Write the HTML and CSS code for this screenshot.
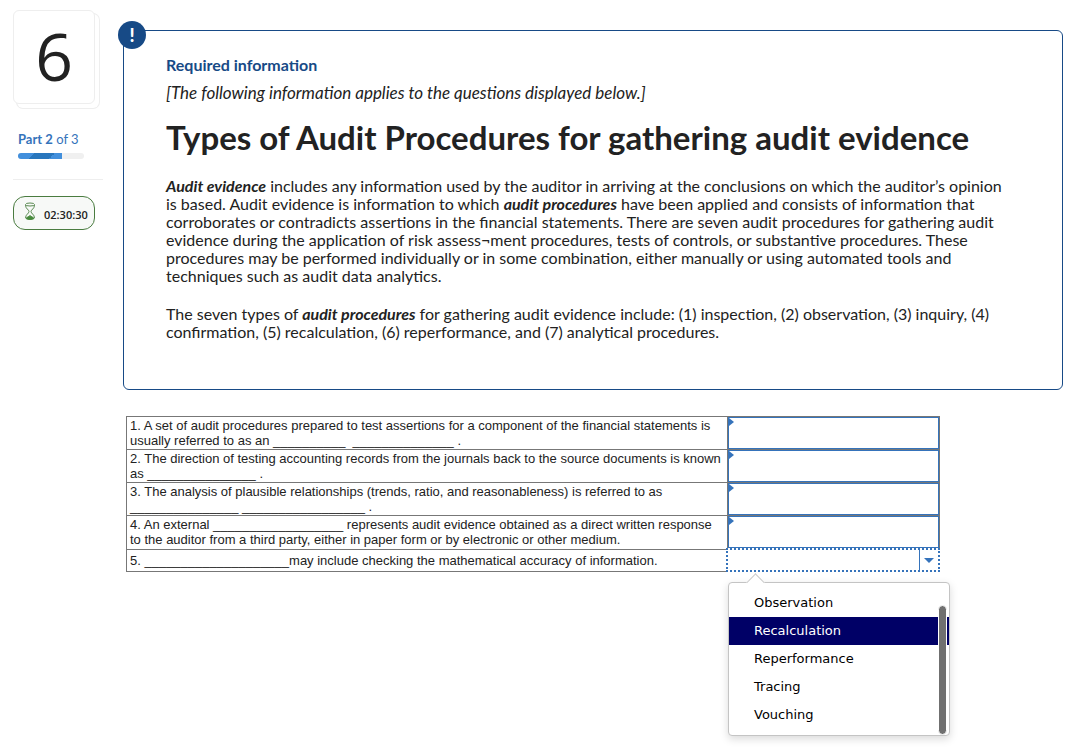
FILE: index.html
```
<!DOCTYPE html>
<html lang="en">
<head>
    <meta charset="UTF-8">
    <title>Question 6</title>
    <link rel="stylesheet" href="styles.css">
</head>
<body>
    <aside class="sidebar">
        <div class="question-number">6</div>
        <div class="part">
            <div class="part-label"><b>Part 2</b> of 3</div>
            <div class="progress"><div class="progress-bar"></div></div>
        </div>
        <div class="timer">
            <svg class="hourglass" width="12" height="19" viewBox="0 0 12 19" fill="none" stroke="#5a8a52">
                <ellipse cx="6" cy="2.500" rx="4.500" ry="1.500"/>
                <path d="M1.500 3C1.500 7 5 7.500 5 9.500S1.500 12.500 1.500 16M10.500 3C10.500 7 7 7.500 7 9.500S10.500 12.500 10.500 16"/>
                <path d="M2 16.500C2.500 15 5 15 6 13.500C7 15 9.500 15 10 16.500C9 17.800 3 17.800 2 16.500Z" fill="#478a3c" stroke="#478a3c"/>
            </svg>
            <span>02:30:30</span>
        </div>
    </aside>

    <main class="content">
        <section class="info-box">
            <span class="info-badge">!</span>
            <h2>Required information</h2>
            <p class="applies"><i>[The following information applies to the questions displayed below.]</i></p>
            <h1>Types of Audit Procedures for gathering audit evidence</h1>
            <p><b><i>Audit evidence</i></b> includes any information used by the auditor in arriving at the conclusions on which the auditor’s opinion<br>
            is based. Audit evidence is information to which <b><i>audit procedures</i></b> have been applied and consists of information that<br>
            corroborates or contradicts assertions in the financial statements. There are seven audit procedures for gathering audit<br>
            evidence during the application of risk assess¬ment procedures, tests of controls, or substantive procedures. These<br>
            procedures may be performed individually or in some combination, either manually or using automated tools and<br>
            techniques such as audit data analytics.</p>
            <p>The seven types of <b><i>audit procedures</i></b> for gathering audit evidence include: (1) inspection, (2) observation, (3) inquiry, (4)<br>
            confirmation, (5) recalculation, (6) reperformance, and (7) analytical procedures.</p>
        </section>

        <table class="questions">
            <tr>
                <td><label for="answer1">1. A set of audit procedures prepared to test assertions for a component of the financial statements is usually referred to as an __________ &nbsp;______________ .</label></td>
                <td class="answer"><select id="answer1"><option></option></select></td>
            </tr>
            <tr>
                <td><label for="answer2">2. The direction of testing accounting records from the journals back to the source documents is known as _______________ .</label></td>
                <td class="answer"><select id="answer2"><option></option></select></td>
            </tr>
            <tr>
                <td><label for="answer3">3. The analysis of plausible relationships (trends, ratio, and reasonableness) is referred to as _______________ _________________ .</label></td>
                <td class="answer"><select id="answer3"><option></option></select></td>
            </tr>
            <tr>
                <td><label for="answer4">4. An external __________________ represents audit evidence obtained as a direct written response to the auditor from a third party, either in paper form or by electronic or other medium.</label></td>
                <td class="answer"><select id="answer4"><option></option></select></td>
            </tr>
            <tr class="last">
                <td><label for="answer5">5. ____________________may include checking the mathematical accuracy of information.</label></td>
                <td class="answer active">
                    <select id="answer5"><option></option></select>
                    <span class="arrow"></span>
                    <div class="menu">
                        <button type="button">Observation</button>
                        <button type="button" class="selected">Recalculation</button>
                        <button type="button">Reperformance</button>
                        <button type="button">Tracing</button>
                        <button type="button">Vouching</button>
                        <span class="scroll-thumb"></span>
                    </div>
                </td>
            </tr>
        </table>
    </main>
</body>
</html>
```
FILE: styles.css
```
* {
    box-sizing: border-box;
}
body {
    display: flex;
    gap: 20px;
    min-height: 100vh;
    margin: 0;
    padding: 10px 17px 10px 13px;
    background: #fff;
    color: #222;
    font-family: Lato, sans-serif;
    font-size: 16px;
    line-height: 18px;
}

/* left column */
.sidebar {
    flex: 0 0 90px;
}
.question-number {
    width: 82px;
    height: 94px;
    border: 1px solid #eee;
    border-radius: 6px;
    background: #fff;
    box-shadow: 4px 4px 0 0 #fff, 4px 4px 0 1px #eee;
    font-family: "Open Sans", sans-serif;
    font-size: 66px;
    line-height: 88px;
    text-align: center;
}
.part {
    padding: 26px 5px 20px;
    border-bottom: 1px solid #eee;
    color: #3573bb;
    font-size: 13px;
}
.progress {
    width: 66px;
    height: 6px;
    margin-top: 5px;
    border-radius: 3px;
    background: #f0f0f0;
    overflow: hidden;
}
.progress-bar {
    width: 44px;
    height: 6px;
    background: linear-gradient(135deg, #428fdc 0 32%, #2876bd 32% 74%, #428fdc 74%);
}
.timer {
    display: flex;
    align-items: center;
    gap: 8px;
    width: 82px;
    height: 34px;
    margin-top: 16px;
    padding-left: 10px;
    border: 1px solid #4a7c40;
    border-radius: 12px;
    background: #f7f9f7;
    font-family: "Open Sans", sans-serif;
    font-size: 11px;
    font-weight: 600;
}
.timer span {
    padding-top: 4px;
}
.hourglass {
    margin-bottom: 4px;
}

/* required information */
.content {
    flex: 1;
    min-width: 0;
    padding-top: 20px;
}
.info-box {
    position: relative;
    padding: 25px 42px 28px;
    border: 1px solid #174a86;
    border-radius: 6px;
}
.info-badge {
    position: absolute;
    top: -10px;
    left: -6px;
    width: 28px;
    height: 28px;
    border-radius: 50%;
    background: #174a86;
    color: #fff;
    font-size: 18px;
    font-weight: 900;
    line-height: 28px;
    text-align: center;
}
.info-box h2 {
    margin: 0 0 10px;
    color: #174a86;
    font-size: 16px;
    line-height: 18px;
}
.info-box h1 {
    margin: 0 0 21px;
    font-size: 33px;
    line-height: 38px;
}
.info-box p {
    margin: 0 0 20px;
    white-space: nowrap;
}
.info-box .applies {
    margin-bottom: 16px;
    font-size: 17px;
}

/* question table */
.questions {
    width: 100%;
    max-width: 814px;
    margin: 26px 0 0 3px;
    border-collapse: collapse;
    table-layout: fixed;
    font-family: "Liberation Sans", Arial, sans-serif;
    font-size: 13px;
    line-height: 15px;
}
.questions td {
    height: 33px;
    padding: 1px 3px;
    border: 1px solid #777;
}
.questions .last td {
    height: 22px;
}
.questions .answer {
    position: relative;
    width: 212px;
    padding: 0;
}
.answer select {
    display: block;
    width: 100%;
    height: 32px;
    border: 1px solid #3573bb;
    border-radius: 0;
    background: #fff;
    appearance: none;
    outline: none;
}
.answer::before {
    content: "";
    position: absolute;
    top: 1px;
    left: 1px;
    border: 4px solid transparent;
    border-left: 5px solid #3573bb;
    border-right: 0;
}
.questions .active {
    border: 2px dotted #3573bb;
}
.active::before {
    display: none;
}
.active select {
    height: 20px;
    border: 0;
}
.arrow {
    position: absolute;
    top: 0;
    right: 0;
    width: 19px;
    height: 20px;
    border-left: 1px solid #3573bb;
    pointer-events: none;
}
.arrow::after {
    content: "";
    position: absolute;
    top: 8px;
    left: 4px;
    border: 5px solid transparent;
    border-top-color: #3573bb;
    border-bottom: 0;
}

/* open list */
.menu {
    position: absolute;
    top: 32px;
    left: 0;
    width: 222px;
    padding: 6px 0;
    border: 1px solid #c4c4c4;
    border-radius: 4px;
    background: #fff;
    box-shadow: 0 3px 8px rgba(0, 0, 0, 0.15);
}
.menu::before {
    content: "";
    position: absolute;
    top: -7px;
    left: 20px;
    width: 12px;
    height: 12px;
    border: 1px solid #ccc;
    border-right: 0;
    border-bottom: 0;
    background: #fff;
    transform: rotate(45deg);
}
.menu button {
    position: relative;
    display: block;
    width: 100%;
    height: 28px;
    padding: 0 25px 2px;
    border: 0;
    background: #fff;
    color: #000;
    font-family: "DejaVu Sans", Verdana, sans-serif;
    font-size: 13px;
    text-align: left;
}
.menu .selected {
    background: #000066;
    color: #fff;
}
.scroll-thumb {
    position: absolute;
    right: 2px;
    bottom: 0;
    width: 9px;
    height: 130px;
    border: 1px solid #fff;
    border-radius: 5px;
    background: #707070;
}
```
